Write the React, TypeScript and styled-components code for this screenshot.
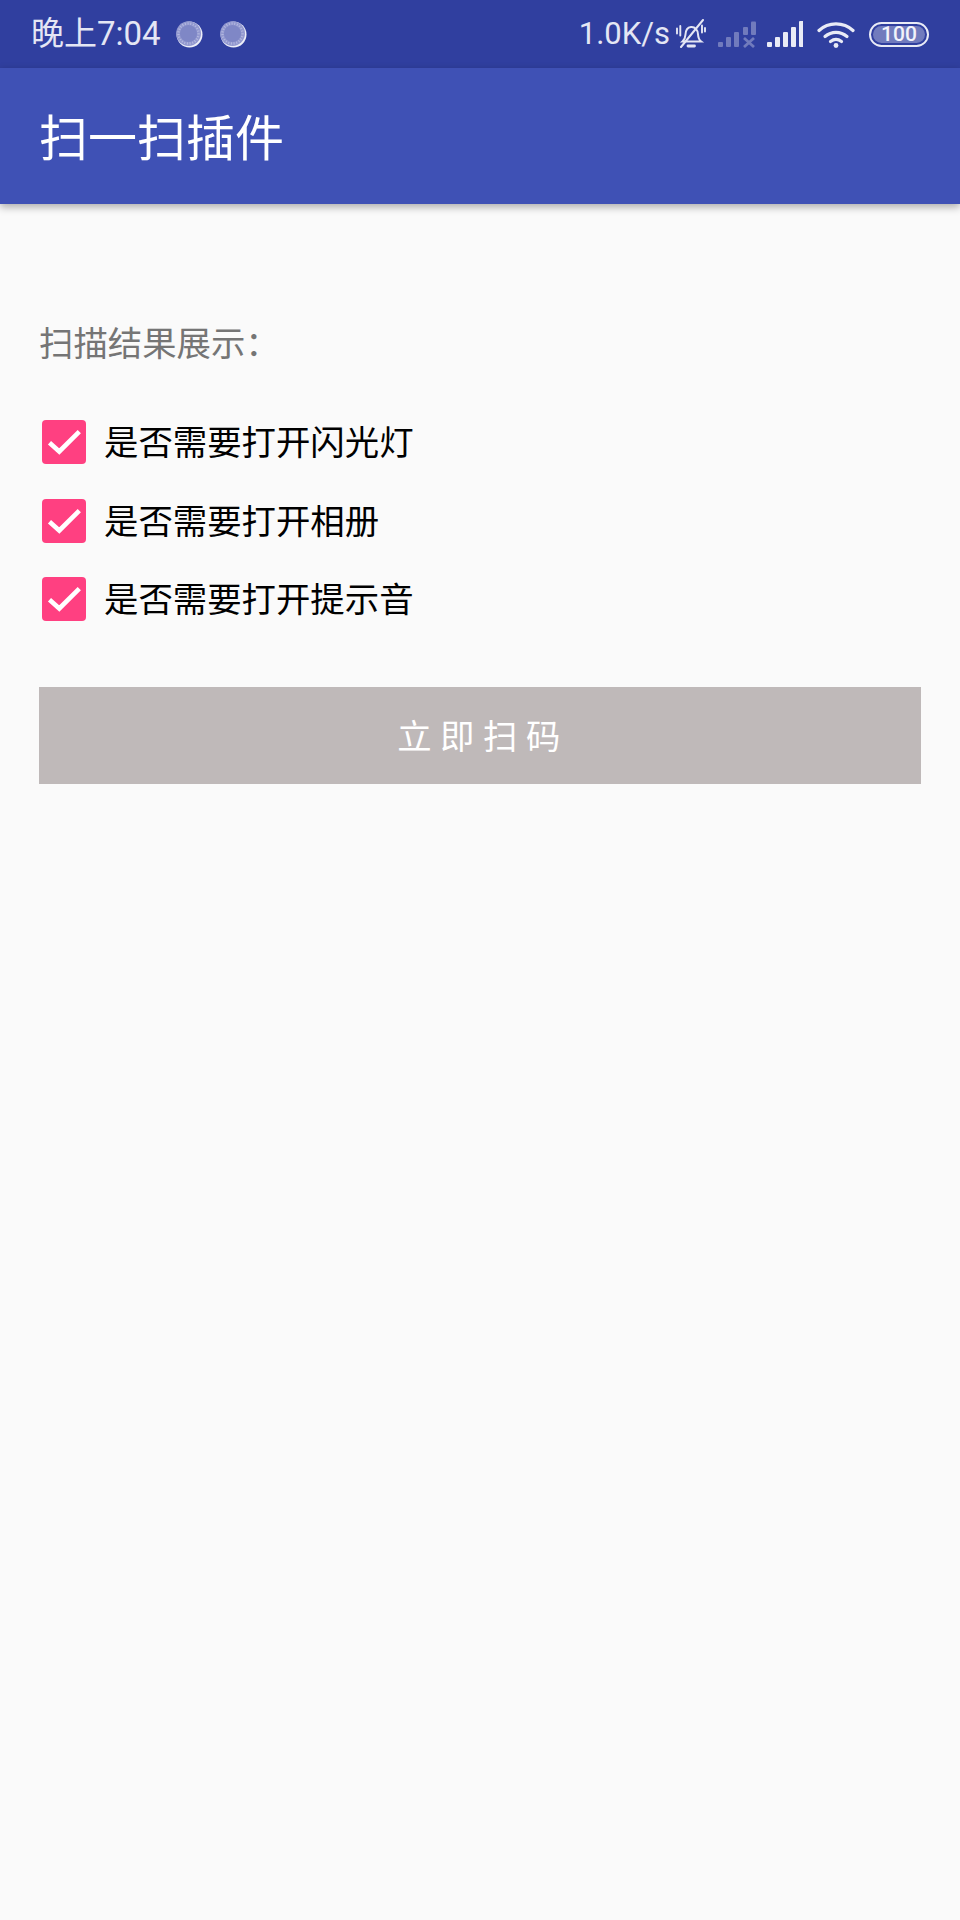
import React from "react";
import styled, { createGlobalStyle } from "styled-components";

const Global = createGlobalStyle`
  html, body { margin: 0; padding: 0; background: #fafafa; }
  * { box-sizing: border-box; }
`;

const Screen = styled.div`
  width: 960px;
  height: 1920px;
  background: #fafafa;
  font-family: "Roboto", "Noto Sans CJK SC", sans-serif;
  overflow: hidden;
  display: flex;
  flex-direction: column;
`;

const StatusBar = styled.div`
  height: 68px;
  background: #303f9f;
  color: #e4e6f4;
  display: flex;
  align-items: center;
  justify-content: space-between;
  padding: 0 31px 0 31px;
`;

const StatusGroup = styled.div`
  display: flex;
  align-items: center;
`;

const Clock = styled.span`
  font-size: 33px;
  line-height: 68px;
  margin-right: 15px;
`;

const Speed = styled.span`
  font-size: 31px;
  line-height: 68px;
  margin-right: 6px;
`;

const NotifyDot = styled.svg`
  width: 27px;
  height: 27px;
  margin-right: 17px;
  display: block;
`;

const StatusIcon = styled.svg<{ $gap: number }>`
  display: block;
  margin-right: ${(p) => p.$gap}px;
`;

const AppBar = styled.header`
  height: 136px;
  background: #3f51b5;
  color: #ffffff;
  display: flex;
  align-items: center;
  padding: 0 39px 4px;
  font-size: 49px;
  box-shadow: 0 3px 8px rgba(0, 0, 0, 0.32);
  position: relative;
`;

const Content = styled.main`
  display: flex;
  flex-direction: column;
  padding: 0 39px;
`;

const ResultLabel = styled.div`
  margin-top: 114px;
  height: 52px;
  line-height: 52px;
  font-size: 34.4px;
  color: #757575;
`;

const Options = styled.div`
  margin-top: 33px;
  display: flex;
  flex-direction: column;
`;

const OptionRow = styled.label`
  height: 78.5px;
  display: flex;
  align-items: center;
  font-size: 34.4px;
  line-height: 44px;
  color: #000000;
`;

const OptionText = styled.span`
  margin-top: 2px;
`;

const CheckBox = styled.span`
  width: 44px;
  height: 44px;
  margin-left: 3px;
  margin-right: 18px;
  border-radius: 4px;
  background: #ff4081;
  display: flex;
`;

const ScanButton = styled.button`
  margin-top: 48.5px;
  height: 97px;
  width: 882px;
  padding: 0 0 3px 6px;
  border: 0;
  border-radius: 0;
  background: #bfb9b9;
  color: #ffffff;
  font-family: inherit;
  font-size: 34.4px;
  letter-spacing: 8.5px;
`;

// Notification spinner: pale crescent at the lower right, dim spoked disc on top
const Spinner = () => (
  <NotifyDot viewBox="0 0 27 27">
    <circle cx="13.500" cy="13.500" r="13" fill="#eceef8" />
    <circle cx="12.600" cy="12.600" r="12.400" fill="#9298cf" />
    <circle cx="12.500" cy="12.500" r="10" fill="none" stroke="#b4b9e0" strokeWidth="2.400" strokeDasharray="1 1.700" />
    <circle cx="12.500" cy="12.500" r="8.600" fill="#7f87c6" />
  </NotifyDot>
);

const MutedBell = () => (
  <StatusIcon $gap={12} width="30" height="30" viewBox="0 0 30 30" fill="none" stroke="#e4e6f4" strokeWidth="2" strokeLinecap="round">
    <path d="M6.500 22.500c2-1.800 2.800-3.700 2.900-6.500.2-4.400 2.400-7.700 5.600-8 4-.4 6.800 3 7 7.200.2 3.200 1 5.600 3.200 7.300z" />
    <path d="M12 27h6.500" strokeWidth="2.800" />
    <path d="M27 1 5 28" />
    <path d="M1 9.500v5M4.300 7v9.500M26 6.500v7M29 9v3.500" strokeWidth="1.900" />
  </StatusIcon>
);

const SignalBars = ({ color, heights }: { color: string; heights: number[] }) => (
  <>
    {heights.map((h, i) => (
      <rect key={i} x={i * 8} y={26 - h} width="5" height={h} rx="1" fill={color} />
    ))}
  </>
);

const SignalEmpty = () => (
  <StatusIcon $gap={11} width="38" height="27" viewBox="0 0 38 27">
    <SignalBars color="#717bbd" heights={[5, 10, 15]} />
    <rect x="25" y="6" width="5" height="8" rx="1" fill="#717bbd" />
    <rect x="33" y="0.500" width="5" height="13.500" rx="1" fill="#717bbd" />
    <path d="M26 17l10 9M36 17l-10 9" stroke="#717bbd" strokeWidth="2.800" />
  </StatusIcon>
);

const SignalFull = () => (
  <StatusIcon $gap={14} width="36" height="27" viewBox="0 0 36 27">
    <SignalBars color="#e9ebf6" heights={[5, 10, 15, 20, 26]} />
  </StatusIcon>
);

const Wifi = () => (
  <StatusIcon $gap={14} width="38" height="27" viewBox="0 0 38 27" fill="none" stroke="#e9ebf6" strokeWidth="3.200" strokeLinecap="round">
    <path d="M2 9.500c9.500-8.800 24.500-8.800 34 0" />
    <path d="M8 15.500c6.500-5.600 15.500-5.600 22 0" />
    <path d="M13.500 20.500c3.500-2.600 7.500-2.600 11 0" />
    <circle cx="19" cy="24.500" r="2.400" fill="#e9ebf6" stroke="none" />
  </StatusIcon>
);

const BatteryShell = styled.div`
  width: 60px;
  height: 25px;
  border: 2.500px solid #e9ebf6;
  border-radius: 13px;
  padding: 2px;
  display: flex;
`;

const BatteryFill = styled.div`
  flex: 1;
  border-radius: 9px;
  background: #717bbd;
  color: #f2f3fa;
  font-size: 21px;
  font-weight: 500;
  line-height: 16px;
  text-align: center;
`;

const options = ["是否需要打开闪光灯", "是否需要打开相册", "是否需要打开提示音"];

export default function App() {
  return (
    <Screen>
      <Global />
      <StatusBar>
        <StatusGroup>
          <Clock>晚上7:04</Clock>
          <Spinner />
          <Spinner />
        </StatusGroup>
        <StatusGroup>
          <Speed>1.0K/s</Speed>
          <MutedBell />
          <SignalEmpty />
          <SignalFull />
          <Wifi />
          <BatteryShell>
            <BatteryFill>100</BatteryFill>
          </BatteryShell>
        </StatusGroup>
      </StatusBar>
      <AppBar>扫一扫插件</AppBar>
      <Content>
        <ResultLabel>扫描结果展示：</ResultLabel>
        <Options>
          {options.map((text) => (
            <OptionRow key={text}>
              <CheckBox>
                <svg width="44" height="44" viewBox="0 0 44 44" fill="none">
                  <path d="M7.500 22.700 17.300 31.500 37.300 11.700" stroke="#fff" strokeWidth="4.600" />
                </svg>
              </CheckBox>
              <OptionText>{text}</OptionText>
            </OptionRow>
          ))}
        </Options>
        <ScanButton>立即扫码</ScanButton>
      </Content>
    </Screen>
  );
}
